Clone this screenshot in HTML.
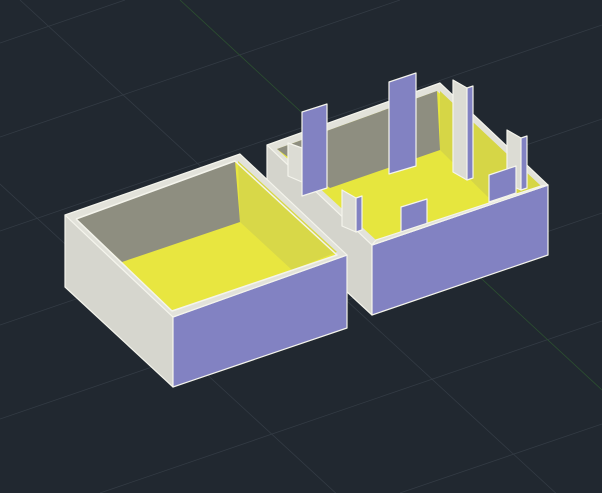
<!DOCTYPE html>
<html><head><style>html,body{margin:0;padding:0;background:#212830;overflow:hidden}svg{display:block}</style></head>
<body>
<svg width="602" height="493" viewBox="0 0 602 493" xmlns="http://www.w3.org/2000/svg">
<rect width="602" height="493" fill="#212830"/>
<g stroke="#333b44" stroke-width="0.8">
<line x1="20" y1="0" x2="560" y2="497"/>
<line x1="-200" y1="0" x2="340" y2="497"/>
<line x1="0" y1="43" x2="125" y2="0"/>
<line x1="0" y1="137" x2="400" y2="0"/>
<line x1="0" y1="231" x2="602" y2="25"/>
<line x1="0" y1="325" x2="602" y2="119"/>
<line x1="0" y1="419" x2="602" y2="213"/>
<line x1="100" y1="493" x2="602" y2="321"/>
<line x1="400" y1="493" x2="602" y2="424"/>
</g>
<line x1="180" y1="0" x2="602" y2="390" stroke="#2c5030" stroke-width="0.8"/>
<g stroke="#f4f4ec" stroke-width="1.2" stroke-linejoin="round">
<!-- right box -->
<polygon points="267,145 372,245 372,315 267,218" fill="#d4d4cc"/>
<polygon points="372,245 548,185 548,255 372,315" fill="#8282c2"/>
<polygon points="267,145 440,83 548,185 372,245" fill="#e2e2da"/>
<polygon points="277,149 437,91 541,186 376,240" fill="#e6e63e" stroke="none"/>
<polygon points="277,149 437,91 440,150 330,188" fill="#8e8e80" stroke="none"/>
<polygon points="440,91 541,186 493,202 440,150" fill="#d6d646" stroke="none"/>
<!-- pillars -->
<polygon points="288,143 302,148 302,182 288,176" fill="#dcdcd4"/>
<polygon points="302,148 307,146 307,180 302,182" fill="#8282c2"/>
<polygon points="302,112 327,104 327,188 302,196" fill="#8282c2"/>
<polygon points="389,82 416,73 416,166 389,174" fill="#8282c2"/>
<polygon points="453,80 467,88 467,180 453,172" fill="#dcdcd4"/>
<polygon points="467,88 473,86 473,178 467,180" fill="#8282c2"/>
<polygon points="507,130 521,138 521,190 507,184" fill="#dcdcd4"/>
<polygon points="521,138 527,136 527,188 521,190" fill="#8282c2"/>
<polygon points="342,190 356,198 356,232 342,226" fill="#dcdcd4"/>
<polygon points="356,198 362,196 362,230 356,232" fill="#8282c2"/>
<polygon points="401,207 427,199 427,225 401,233" fill="#8282c2"/>
<polygon points="489,175 516,166 516,193 489,202" fill="#8282c2"/>
<polygon points="376,240 541,186 548,185 372,245" fill="#e2e2da"/>
<!-- left box -->
<polygon points="65,215 173,317 173,387 65,287" fill="#d6d6ce"/>
<polygon points="173,317 347,255 347,328 173,387" fill="#8282c2"/>
<polygon points="65,215 240,154 347,255 173,317" fill="#e2e2da"/>
<polygon points="76,219 235,161 337,255 172,311" fill="#e8e640" stroke="none"/>
<polygon points="76,219 235,161 240,222 122,262" fill="#8e8e80" stroke="none"/>
<polygon points="238,161 337,252 292,270 240,222" fill="#d8d848" stroke="none"/>
<polyline points="76,219 235,161 337,255 172,311 76,219" fill="none" stroke-width="1.5"/>
</g>
</svg>
</body></html>
